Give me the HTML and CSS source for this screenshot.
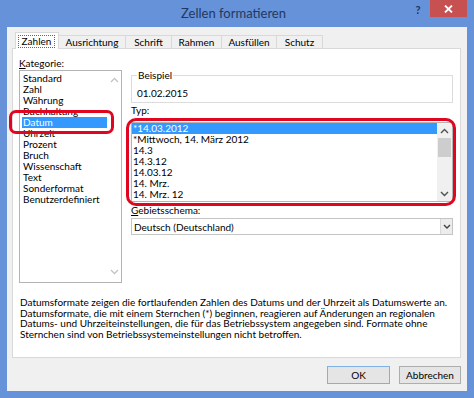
FILE: index.html
```html
<!DOCTYPE html>
<html lang="de">
<head>
  <meta charset="UTF-8">
  <title>Zellen formatieren</title>
  <link rel="stylesheet" href="styles.css">
</head>
<body>

<div class="window">
  <div class="titlebar">
    <div></div>
    <div class="title">Zellen formatieren</div>
    <div class="controls">
      <span class="help">?</span>
      <span class="close">
        <svg width="9" height="8" viewBox="0 0 9 8"><path d="M1 0.5 L8 7.5 M8 0.5 L1 7.5" stroke="#fff" stroke-width="1.8"/></svg>
      </span>
    </div>
  </div>

  <div class="client">
    <div class="tabs">
      <div class="tab active"><span class="focus">Zahlen</span></div>
      <div class="tab w-ausrichtung">Ausrichtung</div>
      <div class="tab w-schrift">Schrift</div>
      <div class="tab w-rahmen">Rahmen</div>
      <div class="tab w-ausfuellen">Ausfüllen</div>
      <div class="tab w-schutz">Schutz</div>
    </div>

    <div class="panel">
      <div class="columns">
        <div class="left">
          <div class="label"><u>K</u>ategorie:</div>
          <div class="listbox categories">
            <div class="items">
              <div class="item">Standard</div>
              <div class="item">Zahl</div>
              <div class="item">Währung</div>
              <div class="item">Buchhaltung</div>
              <div class="item selected">Datum<span class="ring ring-datum"></span></div>
              <div class="item">Uhrzeit</div>
              <div class="item">Prozent</div>
              <div class="item">Bruch</div>
              <div class="item">Wissenschaft</div>
              <div class="item">Text</div>
              <div class="item">Sonderformat</div>
              <div class="item">Benutzerdefiniert</div>
            </div>
            <div class="scroll disabled">
              <svg width="9" height="6" viewBox="0 0 9 6"><path d="M1 5 L4.5 1.5 L8 5" fill="none" stroke="#c4c4c4" stroke-width="1.3"/></svg>
              <svg width="9" height="6" viewBox="0 0 9 6"><path d="M1 1 L4.5 4.5 L8 1" fill="none" stroke="#c4c4c4" stroke-width="1.3"/></svg>
            </div>
          </div>
        </div>

        <div class="right">
          <fieldset class="sample">
            <legend>Beispiel</legend>
            <div>01.02.2015</div>
          </fieldset>

          <div class="label typ-label">Typ:</div>
          <div class="typ-wrap">
            <div class="listbox types">
              <div class="items">
                <div class="item selected">*14.03.2012</div>
                <div class="item">*Mittwoch, 14. März 2012</div>
                <div class="item">14.3</div>
                <div class="item">14.3.12</div>
                <div class="item">14.03.12</div>
                <div class="item">14. Mrz.</div>
                <div class="item">14. Mrz. 12</div>
              </div>
              <div class="scroll">
                <div class="arrow">
                  <svg width="9" height="6" viewBox="0 0 9 6"><path d="M1 5 L4.5 1.5 L8 5" fill="none" stroke="#505050" stroke-width="1.4"/></svg>
                </div>
                <div class="thumb"></div>
                <div class="track"></div>
                <div class="arrow">
                  <svg width="9" height="6" viewBox="0 0 9 6"><path d="M1 1 L4.5 4.5 L8 1" fill="none" stroke="#505050" stroke-width="1.4"/></svg>
                </div>
              </div>
            </div>
            <span class="ring ring-typ"></span>
          </div>

          <div class="label gebiet-label"><u>G</u>ebietsschema:</div>
          <div class="select">
            <span>Deutsch (Deutschland)</span>
            <span class="drop">
              <svg width="8" height="5" viewBox="0 0 8 5"><path d="M1 1 L4 4 L7 1" fill="none" stroke="#404040" stroke-width="1.4"/></svg>
            </span>
          </div>
        </div>
      </div>

      <p class="description">
        Datumsformate zeigen die fortlaufenden Zahlen des Datums und der Uhrzeit als Datumswerte an.<br>
        Datumsformate, die mit einem Sternchen (*) beginnen, reagieren auf Änderungen an regionalen<br>
        Datums- und Uhrzeiteinstellungen, die für das Betriebssystem angegeben sind. Formate ohne<br>
        Sternchen sind von Betriebssystemeinstellungen nicht betroffen.
      </p>
    </div>

    <div class="buttons">
      <button class="default">OK</button>
      <button>Abbrechen</button>
    </div>
  </div>
</div>

</body>
</html>
```

FILE: styles.css
```css
* {
  box-sizing: border-box;
}

body {
  margin: 0;
  font-family: Lato, 'Noto Sans', sans-serif;
  font-size: 10px;
  color: #000;
  background-color: #6592d9;
}

.window {
  width: 474px;
  height: 398px;
  display: flex;
  flex-direction: column;
  background-color: #6592d9;
}

/* Titelleiste */
.titlebar {
  height: 27px;
  display: grid;
  grid-template-columns: 1fr auto 1fr;
  padding-right: 7px;
}

.title {
  font-size: 13px;
  line-height: 27px;
  color: #24385e;
}

.controls {
  display: flex;
  justify-content: flex-end;
  align-items: flex-start;
}

.help {
  width: 12px;
  margin-right: 6px;
  line-height: 20px;
  font-size: 11px;
  font-weight: bold;
  color: #1f3560;
  text-align: center;
}

.close {
  width: 37px;
  height: 17px;
  background-color: #c75050;
  display: flex;
  align-items: center;
  justify-content: center;
}

/* Inhalt */
.client {
  flex: 1;
  margin: 0 7px 7px 7px;
  padding: 5px 6px 7px 5px;
  background-color: #f0f0f0;
  display: flex;
  flex-direction: column;
}

.tabs {
  height: 16px;
  display: flex;
  align-items: flex-end;
  padding-left: 3px;
}

.tab {
  height: 13px;
  line-height: 12px;
  text-align: center;
  border: 1px solid #d9d9d9;
  border-bottom: none;
  margin-left: -1px;
  background-color: #f0f0f0;
}

.tab.active {
  width: 44px;
  height: 17px;
  margin-left: 0;
  margin-bottom: -1px;
  padding: 2px 3px 0 2px;
  background-color: #fff;
  position: relative;
  z-index: 1;
}

.focus {
  display: block;
  border: 1px dotted #666;
  line-height: 11px;
}

.w-ausrichtung { width: 68px; }
.w-schrift { width: 47px; }
.w-rahmen { width: 51px; }
.w-ausfuellen { width: 56px; }
.w-schutz { width: 47px; }

.panel {
  height: 310px;
  background-color: #fff;
  border: 1px solid #d9d9d9;
  padding: 9px 7px 0 6px;
}

.columns {
  display: flex;
  gap: 9px;
}

.left {
  width: 103px;
}

.right {
  flex: 1;
}

.label {
  height: 11px;
  line-height: 11px;
}

.listbox {
  display: flex;
  border: 1px solid #b4b4b4;
}

.items {
  flex: 1;
}

.item {
  height: 11px;
  line-height: 11px;
  padding-left: 1px;
  white-space: nowrap;
}

.item.selected {
  background-color: #3399ff;
  color: #fff;
  position: relative;
}

.categories {
  margin-top: 1px;
  height: 213px;
}

.categories .items {
  padding: 2px 0 0 2px;
}

.scroll {
  width: 14px;
  display: flex;
  flex-direction: column;
  align-items: center;
}

.scroll.disabled {
  justify-content: space-between;
  padding: 6px 0 7px 0;
}

/* rote Markierungen */
.ring {
  position: absolute;
  border: 3px solid #e0061f;
  z-index: 2;
}

.ring-datum {
  top: -7px;
  bottom: -6px;
  left: -13px;
  right: -7px;
  border-radius: 7px;
}

.typ-wrap {
  position: relative;
  margin-top: 6px;
}

.ring-typ {
  top: -4px;
  bottom: -4px;
  left: -5px;
  right: -3px;
  border-radius: 10px;
}

.sample {
  margin: 12px 0 0 0;
  padding: 7px 5px 3px 5px;
  border: 1px solid #dcdcdc;
  min-width: 0;
}

.sample legend {
  padding: 0 1px;
  line-height: 11px;
}

.sample div {
  line-height: 11px;
}

.typ-label {
  margin-top: 2px;
}

.types {
  height: 80px;
}

.types .scroll {
  width: 15px;
  background-color: #f0f0f0;
}

.types .arrow {
  height: 15px;
  display: flex;
  align-items: center;
  justify-content: center;
}

.thumb {
  width: 13px;
  height: 19px;
  background-color: #cdcdcd;
}

.track {
  flex: 1;
}

.gebiet-label {
  margin-top: 3px;
}

.select {
  margin-top: 2px;
  height: 17px;
  border: 1px solid #c4c4c4;
  display: flex;
  justify-content: space-between;
  align-items: center;
  padding-left: 2px;
}

.drop {
  width: 12px;
  height: 15px;
  background-color: #ececec;
  border-left: 1px solid #d8d8d8;
  display: flex;
  align-items: center;
  justify-content: center;
}

.description {
  margin: 14px 0 0 1px;
  line-height: 10.5px;
  white-space: nowrap;
}

.buttons {
  margin-top: 8px;
  display: flex;
  justify-content: flex-end;
  gap: 9px;
}

button {
  font-family: Lato, 'Noto Sans', sans-serif;
  font-size: 10px;
  width: 62px;
  height: 18px;
  padding: 0;
  background-color: #e5e5e5;
  border: 1px solid #adadad;
  color: #000;
}

button.default {
  width: 63px;
  border-color: #7fb1e4;
}
```
